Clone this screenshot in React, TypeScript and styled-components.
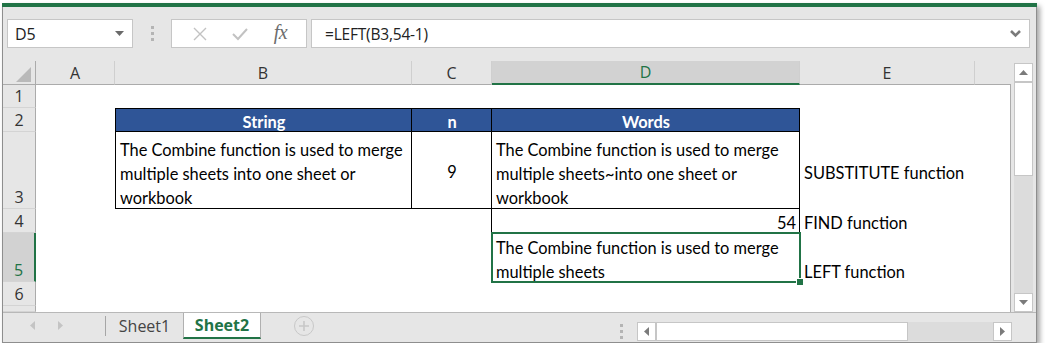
import React from 'react';
import styled, { createGlobalStyle, css } from 'styled-components';

const GREEN = '#217346';
const CHROME = '#e6e6e6';
const UI_FONT = '"Open Sans", "Noto Sans", sans-serif';
const CELL_FONT = 'Lato, "Noto Sans", sans-serif';

const GlobalStyle = createGlobalStyle`
  html, body { margin: 0; padding: 0; background: #fff; }
  body { font-family: ${UI_FONT}; }
`;

const Window = styled.div`
  margin: 3px 0 0 2px;
  width: 1035px;
  box-sizing: border-box;
  border: 1px solid #8e8e8e;
  border-top: 0;
  background: ${CHROME};
  box-shadow: 3px 3px 5px rgba(0, 0, 0, 0.35);
`;

const TitleStrip = styled.div`
  height: 4px;
  margin: 0 -1px;
  background: ${GREEN};
`;

/* ---------- formula bar ---------- */

const FormulaBar = styled.div`
  display: flex;
  align-items: flex-start;
  height: 54px;
  box-sizing: border-box;
  padding: 12px 0 0 4px;
`;

const Box = styled.div`
  height: 29px;
  box-sizing: border-box;
  background: #fff;
  border: 1px solid #c6c6c6;
  display: flex;
  align-items: center;
`;

const NameBox = styled(Box)`
  width: 126px;
  padding: 0 8px 0 7px;
  justify-content: space-between;
  font-size: 16px;
  color: #222;
`;

const Grip = styled.div<{ $w: number }>`
  width: ${(p) => p.$w}px;
  height: 29px;
  display: flex;
  flex-direction: column;
  align-items: center;
  justify-content: center;
  gap: 3px;
  span {
    width: 3px;
    height: 3px;
    background: #b4b4b4;
  }
`;

const ButtonsBox = styled(Box)`
  width: 136px;
  justify-content: space-around;
  padding: 0 6px 0 8px;
`;

const Fx = styled.span`
  font-family: "Liberation Serif", serif;
  font-style: italic;
  font-size: 20px;
  color: #6d6d6d;
  letter-spacing: -0.5px;
  margin-top: -2px;
`;

const FormulaInput = styled(Box)`
  width: 719px;
  margin-left: 4px;
  padding: 0 8px 0 13px;
  justify-content: space-between;
  font-size: 15.5px;
  letter-spacing: -0.2px;
  color: #222;
`;

/* ---------- sheet ---------- */

const Sheet = styled.div`
  display: flex;
  height: 251px;
`;

const Grid = styled.div`
  display: grid;
  grid-template-columns: 33px 79px 297px 80px 308px 175px 36px;
  grid-template-rows: 24px 23px 24px 77px 24px 49px 24px 6px;
  width: 1008px;
  overflow: hidden;
`;

const Corner = styled.div`
  border-right: 1px solid #ababab;
  border-bottom: 1px solid #ababab;
  display: flex;
  align-items: flex-end;
  justify-content: flex-end;
  padding: 0 4px 2px 0;
`;

const ColHead = styled.div<{ $sel?: boolean; $last?: boolean }>`
  display: flex;
  align-items: center;
  justify-content: center;
  font-size: 16px;
  color: #333;
  border-bottom: 1px solid #ababab;
  border-right: ${(p) => (p.$last ? 'none' : '1px solid #cfcfcf')};
  ${(p) =>
    p.$sel &&
    css`
      background: #d2d2d2;
      color: ${GREEN};
      border-bottom: 2px solid ${GREEN};
    `}
`;

const RowHead = styled.div<{ $sel?: boolean; $bottom?: boolean }>`
  display: flex;
  justify-content: center;
  align-items: ${(p) => (p.$bottom ? 'flex-end' : 'center')};
  font-size: 16px;
  color: #333;
  border-right: 1px solid #ababab;
  border-bottom: 1px solid #d4d4d4;
  ${(p) =>
    p.$sel &&
    css`
      background: #d2d2d2;
      color: ${GREEN};
      border-right: 2px solid ${GREEN};
    `}
`;

const line = (on: boolean) => (on ? '1px solid #000' : 'none');

const Cell = styled.div<{
  $b?: string;
  $align?: 'left' | 'center' | 'right';
  $v?: 'center' | 'end';
  $edge?: boolean;
}>`
  position: relative;
  box-sizing: border-box;
  background: #fff;
  display: flex;
  flex-direction: column;
  justify-content: ${(p) => (p.$v === 'center' ? 'center' : 'flex-end')};
  text-align: ${(p) => p.$align || 'left'};
  padding: 0 3px 0 4px;
  font-family: ${CELL_FONT};
  font-size: 16.4px;
  line-height: 24px;
  color: #000;
  white-space: nowrap;
  border-top: ${(p) => line(!!p.$b?.includes('t'))};
  border-left: ${(p) => line(!!p.$b?.includes('l'))};
  border-right: ${(p) => (p.$edge ? '1px solid #ababab' : line(!!p.$b?.includes('r')))};
  border-bottom: ${(p) => line(!!p.$b?.includes('b'))};
`;

/* Calibri sits a little lower in its line than Lato does */
const Lines = styled.span`
  transform: translateY(2px);
`;

const HeadCell = styled(Cell)`
  background: #2f5597;
  color: #fff;
  font-weight: 700;
  text-align: center;
  justify-content: center;
`;

const ActiveCell = styled(Cell)`
  outline: 2px solid ${GREEN};
  outline-offset: -1px;
  z-index: 1;
  &::after {
    content: '';
    position: absolute;
    right: -4px;
    bottom: -4px;
    width: 6px;
    height: 6px;
    background: ${GREEN};
    border: 1px solid #fff;
  }
`;

const VScroll = styled.div`
  width: 25px;
  box-sizing: border-box;
  padding: 2px 3px 0 3px;
  display: flex;
  flex-direction: column;
`;

const ScrollBtn = styled.div`
  width: 19px;
  height: 19px;
  flex: none;
  box-sizing: border-box;
  background: #fff;
  border: 1px solid #c6c6c6;
  display: flex;
  align-items: center;
  justify-content: center;
`;

const Thumb = styled.div<{ $size: number; $h?: boolean }>`
  flex: none;
  box-sizing: border-box;
  background: #fff;
  border: 1px solid #c6c6c6;
  ${(p) => (p.$h ? `width: ${p.$size}px; height: 19px;` : `height: ${p.$size}px; width: 19px;`)}
`;

const Track = styled.div<{ $size?: number }>`
  background: #dcdcdc;
  ${(p) => (p.$size ? `width: ${p.$size}px; height: 19px;` : 'flex: 1; width: 19px;')}
`;

/* ---------- bottom bar ---------- */

const BottomBar = styled.div`
  display: flex;
  align-items: flex-start;
  height: 30px;
  box-sizing: border-box;
  border-top: 1px solid #b8b8b8;
`;

const Nav = styled.div`
  width: 102px;
  height: 25px;
  display: flex;
  align-items: center;
  gap: 23px;
  padding-left: 27px;
  box-sizing: border-box;
`;

const Divider = styled.div`
  width: 1px;
  height: 20px;
  margin-top: 3px;
  background: #a6a6a6;
`;

const Tab = styled.div<{ $active?: boolean }>`
  width: ${(p) => (p.$active ? 78 : 77)}px;
  height: 25px;
  box-sizing: border-box;
  display: flex;
  align-items: center;
  justify-content: center;
  font-size: 16px;
  color: #444;
  ${(p) =>
    p.$active &&
    css`
      background: #fff;
      color: ${GREEN};
      font-weight: 700;
      border-left: 1px solid #b0b0b0;
      border-right: 1px solid #b0b0b0;
      border-bottom: 2px solid ${GREEN};
      height: 26px;
    `}
`;

const AddSheet = styled.div`
  margin: 3px 0 0 33px;
  width: 20px;
  height: 20px;
  box-sizing: border-box;
  border-radius: 50%;
  border: 1px solid #c8c8c8;
  display: flex;
  align-items: center;
  justify-content: center;
`;

const HScroll = styled.div`
  margin: 4px 24px 0 auto;
  display: flex;
  align-items: center;
`;

const Gap = styled.div`
  width: 8px;
`;

/* ---------- icons ---------- */

const Tri = ({ dir, color = '#7b7b7b' }: { dir: 'up' | 'down' | 'left' | 'right'; color?: string }) => {
  const pts = {
    up: '0,5 9,5 4.5,0',
    down: '0,0 9,0 4.5,5',
    left: '5,0 5,9 0,4.5',
    right: '0,0 0,9 5,4.5',
  }[dir];
  const vertical = dir === 'up' || dir === 'down';
  return (
    <svg width={vertical ? 9 : 5} height={vertical ? 5 : 9}>
      <polygon points={pts} fill={color} />
    </svg>
  );
};

const CancelIcon = () => (
  <svg width="14" height="14" viewBox="0 0 14 14">
    <path d="M1 1 L13 13 M13 1 L1 13" stroke="#c2c2c2" strokeWidth="1.4" fill="none" />
  </svg>
);

const EnterIcon = () => (
  <svg width="16" height="14" viewBox="0 0 16 14">
    <path d="M1 7 L6 12 L15 2" stroke="#c2c2c2" strokeWidth="2" fill="none" />
  </svg>
);

const Chevron = () => (
  <svg width="11" height="8" viewBox="0 0 11 8">
    <path d="M1 1 L5.5 5.5 L10 1" stroke="#7a7a7a" strokeWidth="2.6" fill="none" />
  </svg>
);

const CornerMark = () => (
  <svg width="15" height="15">
    <polygon points="15,0 15,15 0,15" fill="#b9b9b9" />
  </svg>
);

const Plus = () => (
  <svg width="12" height="12" viewBox="0 0 12 12">
    <path d="M6 1 V11 M1 6 H11" stroke="#c8c8c8" strokeWidth="1.6" />
  </svg>
);

const Dots = ({ w }: { w: number }) => (
  <Grip $w={w}>
    <span />
    <span />
    <span />
  </Grip>
);

const columns = ['A', 'B', 'C', 'D', 'E'];

export default function App() {
  return (
    <>
      <GlobalStyle />
      <Window>
        <TitleStrip />
        <FormulaBar>
          <NameBox>
            D5
            <Tri dir="down" color="#6a6a6a" />
          </NameBox>
          <Dots w={38} />
          <ButtonsBox>
            <CancelIcon />
            <EnterIcon />
            <Fx>fx</Fx>
          </ButtonsBox>
          <FormulaInput>
            =LEFT(B3,54-1)
            <Chevron />
          </FormulaInput>
        </FormulaBar>

        <Sheet>
          <Grid>
            <Corner>
              <CornerMark />
            </Corner>
            {columns.map((c) => (
              <ColHead key={c} $sel={c === 'D'}>
                {c}
              </ColHead>
            ))}
            <ColHead $last />

            <RowHead>1</RowHead>
            <Cell />
            <Cell />
            <Cell />
            <Cell />
            <Cell />
            <Cell $edge />

            <RowHead>2</RowHead>
            <Cell />
            <HeadCell $b="tlrb"><Lines>String</Lines></HeadCell>
            <HeadCell $b="trb"><Lines>n</Lines></HeadCell>
            <HeadCell $b="trb"><Lines>Words</Lines></HeadCell>
            <Cell />
            <Cell $edge />

            <RowHead $bottom>3</RowHead>
            <Cell />
            <Cell $b="lrb">
              <Lines>
                The Combine function is used to merge
                <br />
                multiple sheets into one sheet or
                <br />
                workbook
              </Lines>
            </Cell>
            <Cell $b="rb" $align="center" $v="center">
              <Lines>9</Lines>
            </Cell>
            <Cell $b="rb">
              <Lines>
                The Combine function is used to merge
                <br />
                multiple sheets~into one sheet or
                <br />
                workbook
              </Lines>
            </Cell>
            <Cell $v="center">
              <Lines>SUBSTITUTE function</Lines>
            </Cell>
            <Cell $edge />

            <RowHead>4</RowHead>
            <Cell />
            <Cell />
            <Cell $b="r" />
            <Cell $b="r" $align="right">
              <Lines>54</Lines>
            </Cell>
            <Cell>
              <Lines>FIND function</Lines>
            </Cell>
            <Cell $edge />

            <RowHead $sel $bottom>
              5
            </RowHead>
            <Cell />
            <Cell />
            <Cell />
            <ActiveCell>
              <Lines>
                The Combine function is used to merge
                <br />
                multiple sheets
              </Lines>
            </ActiveCell>
            <Cell>
              <Lines>LEFT function</Lines>
            </Cell>
            <Cell $edge />

            <RowHead>6</RowHead>
            <Cell />
            <Cell />
            <Cell />
            <Cell />
            <Cell />
            <Cell $edge />

            <RowHead />
            <Cell />
            <Cell />
            <Cell />
            <Cell />
            <Cell />
            <Cell $edge />
          </Grid>
          <VScroll>
            <ScrollBtn>
              <Tri dir="up" />
            </ScrollBtn>
            <Thumb $size={94} />
            <Track />
            <ScrollBtn>
              <Tri dir="down" />
            </ScrollBtn>
          </VScroll>
        </Sheet>

        <BottomBar>
          <Nav>
            <Tri dir="left" color="#c4c4c4" />
            <Tri dir="right" color="#c4c4c4" />
          </Nav>
          <Divider />
          <Tab>Sheet1</Tab>
          <Tab $active>Sheet2</Tab>
          <AddSheet>
            <Plus />
          </AddSheet>
          <HScroll>
            <Dots w={16} />
            <Gap />
            <ScrollBtn>
              <Tri dir="left" />
            </ScrollBtn>
            <Thumb $h $size={252} />
            <Track $size={85} />
            <ScrollBtn>
              <Tri dir="right" />
            </ScrollBtn>
          </HScroll>
        </BottomBar>
      </Window>
    </>
  );
}
